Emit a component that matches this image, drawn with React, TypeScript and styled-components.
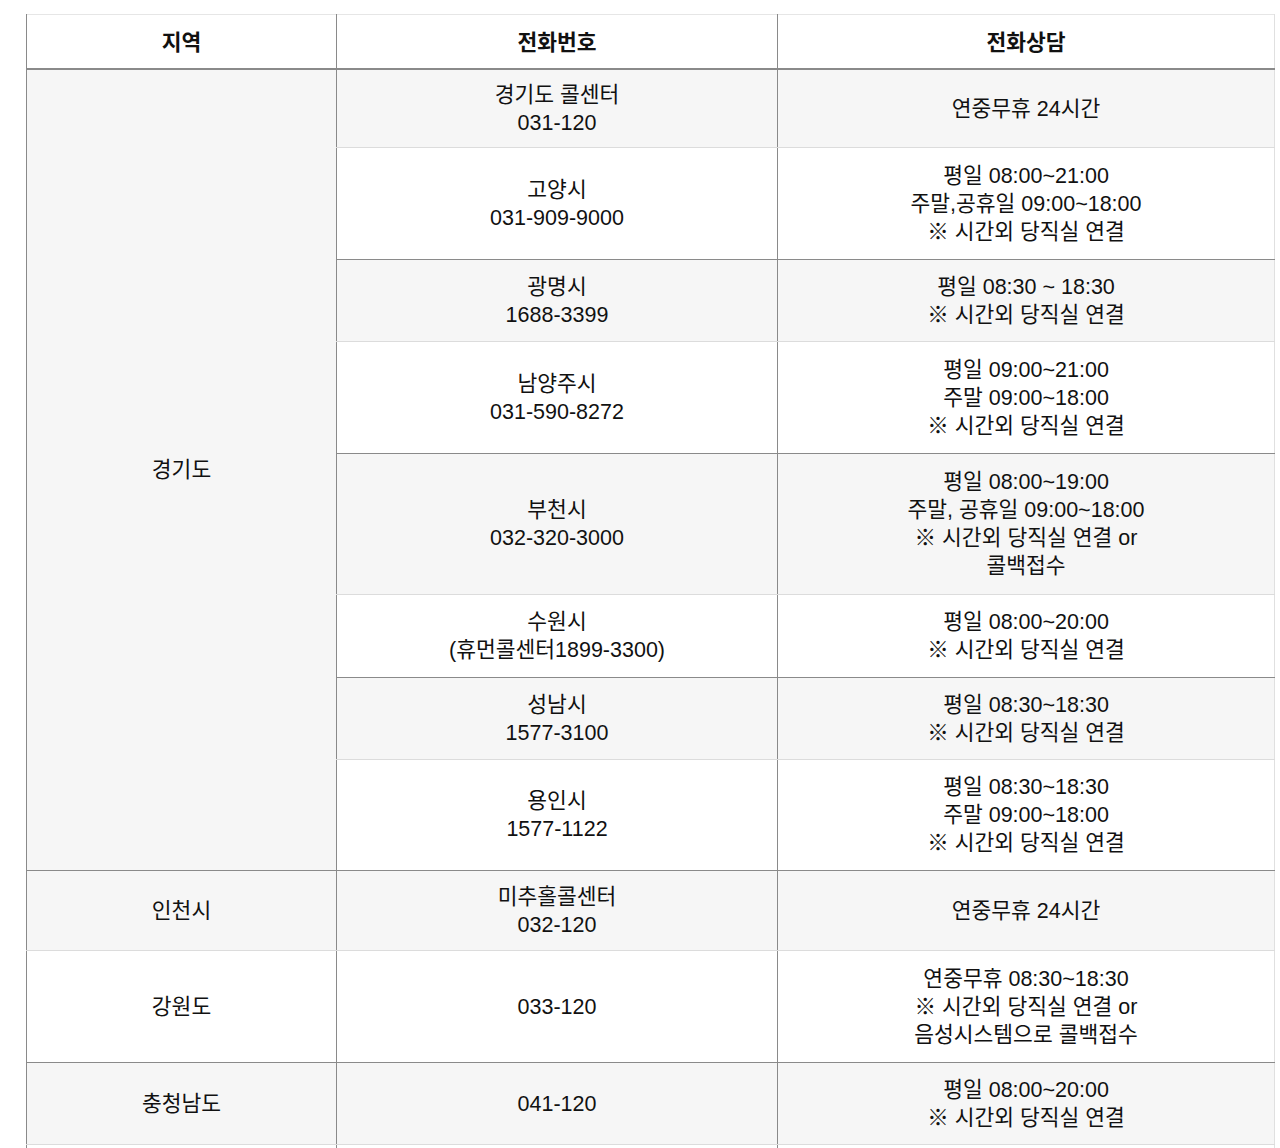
import React from "react";
import styled, { createGlobalStyle } from "styled-components";

const Global = createGlobalStyle`
  html, body { margin: 0; padding: 0; background: #ffffff; }
  body {
    font-family: "Liberation Sans", "Noto Sans CJK KR", sans-serif;
    color: #111111;
  }
`;

const Page = styled.div`
  padding: 14px 6px 0 26px;
`;

const Table = styled.table`
  width: 1248px;
  border-collapse: collapse;
  table-layout: fixed;
  border-top: 1px solid #e6e6e6;
  font-size: 21.5px;
  line-height: 28px;
  text-align: center;
`;

const Col = styled.col<{ $w: number }>`
  width: ${(p) => p.$w}px;
`;

const Th = styled.th<{ $last?: boolean }>`
  padding: 14px 8px 11px;
  font-weight: 700;
  background: #ffffff;
  border-left: 1px solid #8a8a8a;
  border-bottom: 2px solid #8a8a8a;
  border-right: ${(p) => (p.$last ? "1px solid #e0e0e0" : "none")};
  color: #111111;
`;

const Td = styled.td<{ $shade?: boolean; $dark?: boolean; $last?: boolean; $padY: number }>`
  padding: ${(p) => p.$padY}px 8px;
  font-weight: 400;
  vertical-align: middle;
  background: ${(p) => (p.$shade ? "#f6f6f6" : "#ffffff")};
  border-left: 1px solid #8a8a8a;
  border-bottom: 1px solid ${(p) => (p.$dark ? "#8a8a8a" : "#dcdcdc")};
  border-right: ${(p) => (p.$last ? "1px solid #e0e0e0" : "none")};
`;

const EmptyRow = styled.tr`
  height: 40px;
`;

type Row = { region?: string; span?: number; pad?: number; phone: string[]; hours: string[] };

const rows: Row[] = [
  { region: "경기도", span: 8, pad: 10.5, phone: ["경기도 콜센터", "031-120"], hours: ["연중무휴 24시간"] },
  { pad: 13.5, phone: ["고양시", "031-909-9000"], hours: ["평일 08:00~21:00", "주말,공휴일 09:00~18:00", "※ 시간외 당직실 연결"] },
  { pad: 12.5, phone: ["광명시", "1688-3399"], hours: ["평일 08:30 ~ 18:30", "※ 시간외 당직실 연결"] },
  { pad: 13.5, phone: ["남양주시", "031-590-8272"], hours: ["평일 09:00~21:00", "주말 09:00~18:00", "※ 시간외 당직실 연결"] },
  { pad: 14, phone: ["부천시", "032-320-3000"], hours: ["평일 08:00~19:00", "주말, 공휴일 09:00~18:00", "※ 시간외 당직실 연결 or", "콜백접수"] },
  { phone: ["수원시", "(휴먼콜센터1899-3300)"], hours: ["평일 08:00~20:00", "※ 시간외 당직실 연결"] },
  { pad: 12.5, phone: ["성남시", "1577-3100"], hours: ["평일 08:30~18:30", "※ 시간외 당직실 연결"] },
  { phone: ["용인시", "1577-1122"], hours: ["평일 08:30~18:30", "주말 09:00~18:00", "※ 시간외 당직실 연결"] },
  { region: "인천시", span: 1, pad: 11.5, phone: ["미추홀콜센터", "032-120"], hours: ["연중무휴 24시간"] },
  { region: "강원도", span: 1, pad: 13.5, phone: ["033-120"], hours: ["연중무휴 08:30~18:30", "※ 시간외 당직실 연결 or", "음성시스템으로 콜백접수"] },
  { region: "충청남도", span: 1, pad: 12.5, phone: ["041-120"], hours: ["평일 08:00~20:00", "※ 시간외 당직실 연결"] },
];

const Lines: React.FC<{ lines: string[] }> = ({ lines }) => (
  <>
    {lines.map((l, i) => (
      <React.Fragment key={i}>
        {i > 0 && <br />}
        {l}
      </React.Fragment>
    ))}
  </>
);

export default function App() {
  return (
    <>
      <Global />
      <Page>
        <Table>
          <colgroup>
            <Col $w={310} />
            <Col $w={441} />
            <Col $w={497} />
          </colgroup>
          <thead>
            <tr>
              <Th>지역</Th>
              <Th>전화번호</Th>
              <Th $last>전화상담</Th>
            </tr>
          </thead>
          <tbody>
            {rows.map((r, i) => {
              const shade = i % 2 === 0;
              const dark = !shade;
              const pad = r.pad ?? 13;
              return (
                <tr key={i}>
                  {r.region && (
                    <Td
                      rowSpan={r.span}
                      $padY={pad}
                      $shade={shade}
                      $dark={r.span && r.span > 1 ? true : dark}
                    >
                      {r.region}
                    </Td>
                  )}
                  <Td $padY={pad} $shade={shade} $dark={dark}>
                    <Lines lines={r.phone} />
                  </Td>
                  <Td $padY={pad} $shade={shade} $dark={dark} $last>
                    <Lines lines={r.hours} />
                  </Td>
                </tr>
              );
            })}
            <EmptyRow>
              <Td $padY={0} $dark />
              <Td $padY={0} $dark />
              <Td $padY={0} $dark $last />
            </EmptyRow>
          </tbody>
        </Table>
      </Page>
    </>
  );
}
